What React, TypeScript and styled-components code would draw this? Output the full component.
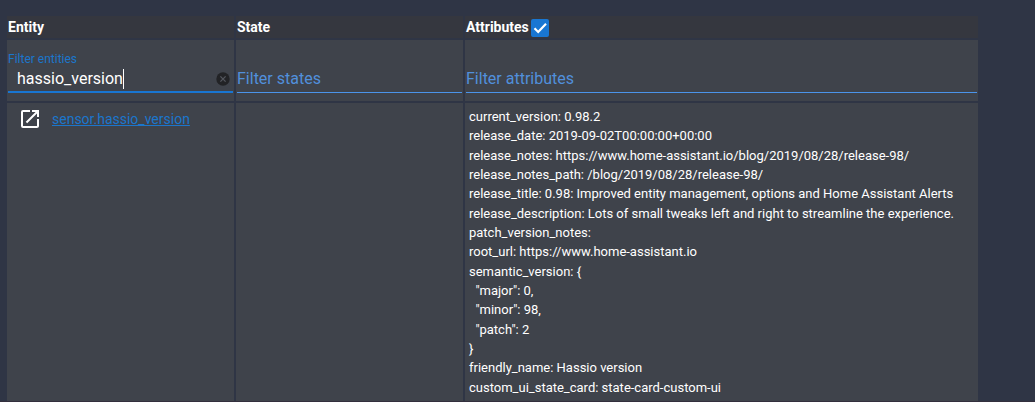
import React, { useState } from "react";
import styled, { createGlobalStyle } from "styled-components";

const GlobalStyle = createGlobalStyle`
  * { box-sizing: border-box; }
  html { background: #2f3545; }
  body {
    margin: 0;
    color: #fff;
    font-family: Roboto, "Noto Sans", sans-serif;
    font-size: 14px;
    line-height: 19px;
  }
`;

const Page = styled.main`
  padding: 14px 55px 0 5px;
  border-bottom: 1px solid #332f3d;
`;

const EntityTable = styled.table`
  width: 100%;
  table-layout: fixed;
  border-collapse: separate;
  border-spacing: 2px;
  margin-bottom: -2px;
`;

const Column = styled.col<{ $narrow?: boolean }>`
  width: ${(p) => (p.$narrow ? "227px" : "auto")};
`;

const HeadCell = styled.th`
  height: 22px;
  padding: 0 1px;
  background: #35373f;
  text-align: left;
  font-weight: 700;
`;

const HeadLabel = styled.label`
  display: flex;
  align-items: center;
  gap: 2px;
  height: 22px;
`;

const CheckFrame = styled.span`
  display: grid;
  margin-top: 2px;

  > * { grid-area: 1 / 1; }
`;

const CheckBox = styled.input`
  appearance: none;
  width: 18px;
  height: 18px;
  margin: 0;
  border: 2px solid #1976d2;
  border-radius: 2px;

  &:checked { background: #1976d2; }
  &:not(:checked) + svg { visibility: hidden; }
`;

const CheckMark = styled.svg`
  width: 18px;
  height: 18px;
  pointer-events: none;
`;

const FilterCell = styled.th`
  height: 61px;
  padding: 8px 1px 0;
  background: #3f434b;
  vertical-align: top;
  text-align: left;
  font-weight: 400;
`;

const FloatingLabel = styled.label<{ $hidden?: boolean }>`
  display: block;
  height: 20px;
  font-size: 12px;
  line-height: 22px;
  color: #1b76cc;
  visibility: ${(p) => (p.$hidden ? "hidden" : "visible")};
`;

const Field = styled.div<{ $active?: boolean }>`
  display: flex;
  align-items: center;
  height: 25px;
  padding: ${(p) => (p.$active ? "0 3px 1px 9px" : "0 0 2px")};
  border-bottom: ${(p) => (p.$active ? "2px solid #1976d2" : "1px solid #4b94ea")};
`;

const FieldInput = styled.input<{ $filled?: boolean }>`
  flex: ${(p) => (p.$filled ? "0 1 auto" : "1")};
  field-sizing: ${(p) => (p.$filled ? "content" : "fixed")};
  min-width: 0;
  height: 22px;
  padding: 0;
  border: 0;
  outline: 0;
  background: transparent;
  color: #fff;
  font: 16px/22px Roboto, "Noto Sans", sans-serif;

  &::placeholder { color: #5190dc; opacity: 1; }
`;

const Caret = styled.span`
  width: 1px;
  height: 20px;
  background: #fff;
`;

const ClearButton = styled.button`
  display: flex;
  margin-left: auto;
  padding: 0;
  border: 0;
  background: none;
  color: #222326;

  svg { width: 14px; height: 14px; }
`;

const BodyCell = styled.td`
  padding: 4px;
  background: #3f434b;
  vertical-align: top;
`;

const EntityRow = styled.div`
  display: flex;
  align-items: center;
  gap: 10px;
  padding-left: 7px;
`;

const OpenButton = styled.button`
  display: flex;
  padding: 0;
  border: 0;
  background: none;
  color: #fff;

  svg { width: 24px; height: 24px; }
`;

const EntityLink = styled.a`
  line-height: 18px;
  color: #1b76cc;
  text-decoration: underline;
`;

const AttributeList = styled.ul`
  display: flex;
  flex-direction: column;
  justify-content: space-between;
  min-height: 290px;
  margin: 0;
  padding: 0;
  list-style: none;
  font-size: 13px;
  white-space: pre-wrap;
`;

const attributes = [
  "current_version: 0.98.2",
  "release_date: 2019-09-02T00:00:00+00:00",
  "release_notes: https://www.home-assistant.io/blog/2019/08/28/release-98/",
  "release_notes_path: /blog/2019/08/28/release-98/",
  "release_title: 0.98: Improved entity management, options and Home Assistant Alerts",
  "release_description: Lots of small tweaks left and right to streamline the experience.",
  "patch_version_notes:",
  "root_url: https://www.home-assistant.io",
  "semantic_version: {",
  '  "major": 0,',
  '  "minor": 98,',
  '  "patch": 2',
  "}",
  "friendly_name: Hassio version",
  "custom_ui_state_card: state-card-custom-ui",
];

function EmptyFilter({ id, label }: { id: string; label: string }) {
  return (
    <FilterCell>
      <FloatingLabel htmlFor={id} $hidden>{label}</FloatingLabel>
      <Field>
        <FieldInput id={id} aria-label={label} placeholder={label} />
      </Field>
    </FilterCell>
  );
}

export default function App() {
  const [entity, setEntity] = useState("hassio_version");

  return (
    <>
      <GlobalStyle />
      <Page>
        <EntityTable>
          <colgroup>
            <Column $narrow />
            <Column $narrow />
            <Column />
          </colgroup>
          <thead>
            <tr>
              <HeadCell>Entity</HeadCell>
              <HeadCell>State</HeadCell>
              <HeadCell>
                <HeadLabel htmlFor="show-attributes">
                  Attributes
                  <CheckFrame>
                    <CheckBox id="show-attributes" type="checkbox" defaultChecked />
                    <CheckMark viewBox="0 0 18 18" aria-hidden="true">
                      <path d="M3.5 9.3 7.2 13 15 4.8" fill="none" stroke="#fff" strokeWidth="2.2" />
                    </CheckMark>
                  </CheckFrame>
                </HeadLabel>
              </HeadCell>
            </tr>
            <tr>
              <FilterCell>
                <FloatingLabel htmlFor="filter-entities">Filter entities</FloatingLabel>
                <Field $active>
                  <FieldInput
                    $filled
                    id="filter-entities"
                    value={entity}
                    onChange={(e) => setEntity(e.target.value)}
                  />
                  <Caret />
                  <ClearButton type="button" aria-label="Clear" onClick={() => setEntity("")}>
                    <svg viewBox="0 0 14 14" aria-hidden="true">
                      <circle cx="7" cy="7" r="6.7" fill="currentColor" />
                      <path d="M4.4 4.4 9.6 9.6M9.6 4.4 4.4 9.6" stroke="#54575e" strokeWidth="1.3" />
                    </svg>
                  </ClearButton>
                </Field>
              </FilterCell>
              <EmptyFilter id="filter-states" label="Filter states" />
              <EmptyFilter id="filter-attributes" label="Filter attributes" />
            </tr>
          </thead>
          <tbody>
            <tr>
              <BodyCell>
                <EntityRow>
                  <OpenButton type="button" aria-label="More info">
                    <svg viewBox="0 0 24 24" aria-hidden="true">
                      <path
                        fill="currentColor"
                        d="M19 19H5V5h7V3H5a2 2 0 0 0-2 2v14a2 2 0 0 0 2 2h14c1.1 0 2-.9 2-2v-7h-2v7zM14 3v2h3.59l-9.83 9.83 1.41 1.41L19 6.41V10h2V3h-7z"
                      />
                    </svg>
                  </OpenButton>
                  <EntityLink href="#">sensor.hassio_version</EntityLink>
                </EntityRow>
              </BodyCell>
              <BodyCell />
              <BodyCell>
                <AttributeList>
                  {attributes.map((line) => (
                    <li key={line}>{line}</li>
                  ))}
                </AttributeList>
              </BodyCell>
            </tr>
          </tbody>
        </EntityTable>
      </Page>
    </>
  );
}
